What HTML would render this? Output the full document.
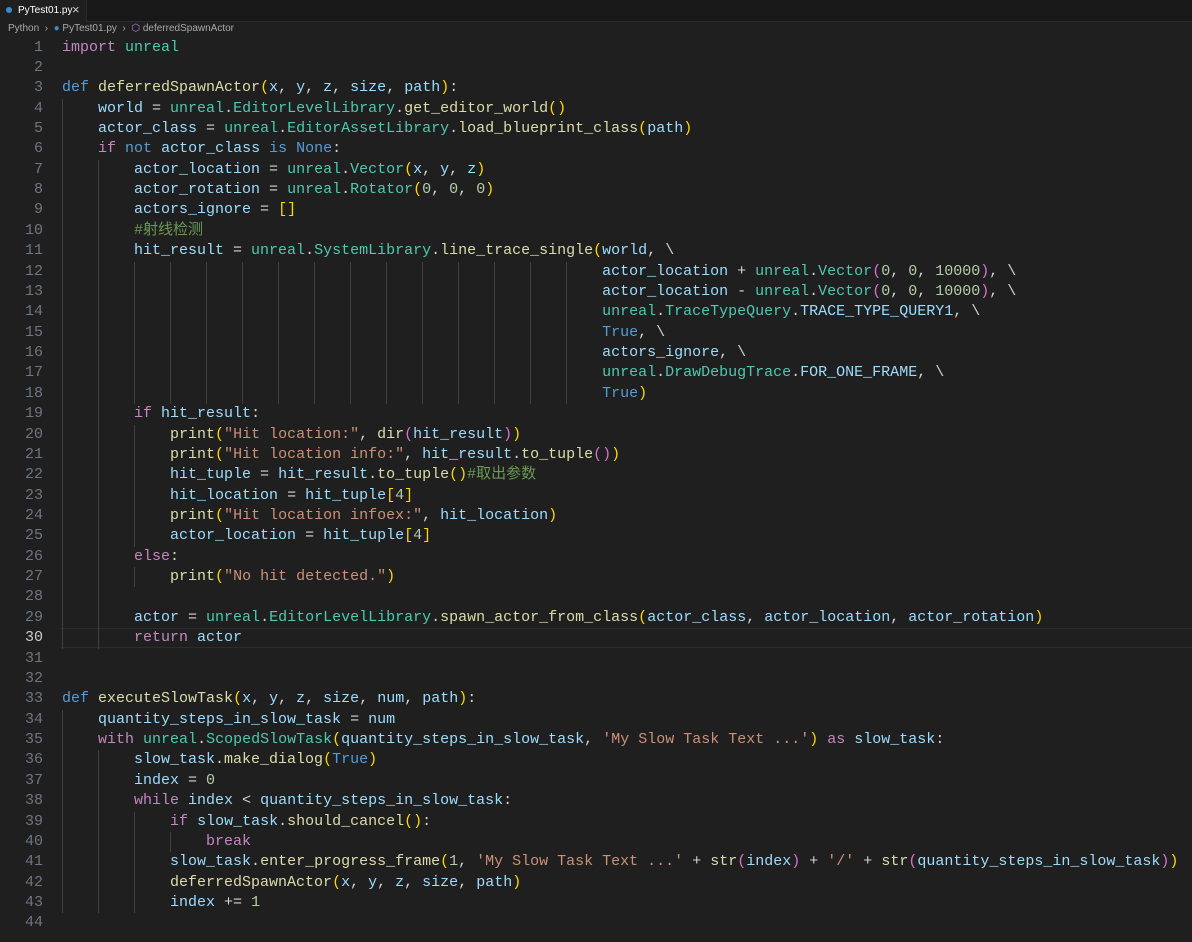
<!DOCTYPE html>
<html><head><meta charset="utf-8"><style>
body{margin:0;width:1192px;height:942px;background:#1f1f1f;overflow:hidden;position:relative;font-family:"Liberation Mono","Noto Sans CJK SC",monospace;}
#tabs{position:absolute;left:0;top:0;width:1192px;height:21px;background:#181818;border-bottom:1px solid #2b2b2b}
#tab{position:absolute;left:0;top:0;width:86px;height:22px;background:#1f1f1f;font:10px "Liberation Sans",sans-serif;color:#fff;border-right:1px solid #2b2b2b}
#crumb{position:absolute;left:8px;top:23px;font:10px "Liberation Sans",sans-serif;color:#a9a9a9;white-space:pre}
.ln{position:absolute;left:0;width:43px;text-align:right;color:#6e7681;font-size:15px;line-height:20.37px}
.cl{position:absolute;left:62px;white-space:pre;font-size:15px;line-height:20.37px;color:#d4d4d4}
.g{position:absolute;width:1px;background:#404040}
.k{color:#c586c0}.d{color:#569cd6}.f{color:#dcdcaa}.v{color:#9cdcfe}.c{color:#4ec9b0}.s{color:#ce9178}.n{color:#b5cea8}.cm{color:#6a9955}.b1{color:#ffd700}.b2{color:#da70d6}.b3{color:#179fff}
</style></head><body>
<div id="tabs"></div>
<div id="tab"><span style="position:absolute;left:6px;top:7px;width:6px;height:6px;border-radius:50%;background:#3d8ac6"></span><span style="position:absolute;left:18px;top:5px">PyTest01.py</span><span style="position:absolute;left:72px;top:2px;color:#ccc;font-size:13px">×</span></div>
<div id="crumb">Python  ›  <span style="color:#3d8ac6">●</span> PyTest01.py  ›  <span style="color:#b180d7">⬡</span> deferredSpawnActor</div>
<div style="position:absolute;left:60px;top:627.7px;width:1132px;height:18.4px;border-top:1px solid #2c2c2c;border-bottom:1px solid #2c2c2c"></div>
<div id="guides"></div>
<div id="code"></div>
<script>
var P='                                                            ';
var L=[
'<span class="k">import</span> <span class="c">unreal</span>',
'',
'<span class="d">def</span> <span class="f">deferredSpawnActor</span><span class="b1">(</span><span class="v">x</span>, <span class="v">y</span>, <span class="v">z</span>, <span class="v">size</span>, <span class="v">path</span><span class="b1">)</span>:',
'    <span class="v">world</span> = <span class="c">unreal</span>.<span class="c">EditorLevelLibrary</span>.<span class="f">get_editor_world</span><span class="b1">()</span>',
'    <span class="v">actor_class</span> = <span class="c">unreal</span>.<span class="c">EditorAssetLibrary</span>.<span class="f">load_blueprint_class</span><span class="b1">(</span><span class="v">path</span><span class="b1">)</span>',
'    <span class="k">if</span> <span class="d">not</span> <span class="v">actor_class</span> <span class="d">is</span> <span class="d">None</span>:',
'        <span class="v">actor_location</span> = <span class="c">unreal</span>.<span class="c">Vector</span><span class="b1">(</span><span class="v">x</span>, <span class="v">y</span>, <span class="v">z</span><span class="b1">)</span>',
'        <span class="v">actor_rotation</span> = <span class="c">unreal</span>.<span class="c">Rotator</span><span class="b1">(</span><span class="n">0</span>, <span class="n">0</span>, <span class="n">0</span><span class="b1">)</span>',
'        <span class="v">actors_ignore</span> = <span class="b1">[]</span>',
'        <span class="cm">#射线检测</span>',
'        <span class="v">hit_result</span> = <span class="c">unreal</span>.<span class="c">SystemLibrary</span>.<span class="f">line_trace_single</span><span class="b1">(</span><span class="v">world</span>, \\',
P+'<span class="v">actor_location</span> + <span class="c">unreal</span>.<span class="c">Vector</span><span class="b2">(</span><span class="n">0</span>, <span class="n">0</span>, <span class="n">10000</span><span class="b2">)</span>, \\',
P+'<span class="v">actor_location</span> - <span class="c">unreal</span>.<span class="c">Vector</span><span class="b2">(</span><span class="n">0</span>, <span class="n">0</span>, <span class="n">10000</span><span class="b2">)</span>, \\',
P+'<span class="c">unreal</span>.<span class="c">TraceTypeQuery</span>.<span class="v">TRACE_TYPE_QUERY1</span>, \\',
P+'<span class="d">True</span>, \\',
P+'<span class="v">actors_ignore</span>, \\',
P+'<span class="c">unreal</span>.<span class="c">DrawDebugTrace</span>.<span class="v">FOR_ONE_FRAME</span>, \\',
P+'<span class="d">True</span><span class="b1">)</span>',
'        <span class="k">if</span> <span class="v">hit_result</span>:',
'            <span class="f">print</span><span class="b1">(</span><span class="s">"Hit location:"</span>, <span class="f">dir</span><span class="b2">(</span><span class="v">hit_result</span><span class="b2">)</span><span class="b1">)</span>',
'            <span class="f">print</span><span class="b1">(</span><span class="s">"Hit location info:"</span>, <span class="v">hit_result</span>.<span class="f">to_tuple</span><span class="b2">()</span><span class="b1">)</span>',
'            <span class="v">hit_tuple</span> = <span class="v">hit_result</span>.<span class="f">to_tuple</span><span class="b1">()</span><span class="cm">#取出参数</span>',
'            <span class="v">hit_location</span> = <span class="v">hit_tuple</span><span class="b1">[</span><span class="n">4</span><span class="b1">]</span>',
'            <span class="f">print</span><span class="b1">(</span><span class="s">"Hit location infoex:"</span>, <span class="v">hit_location</span><span class="b1">)</span>',
'            <span class="v">actor_location</span> = <span class="v">hit_tuple</span><span class="b1">[</span><span class="n">4</span><span class="b1">]</span>',
'        <span class="k">else</span>:',
'            <span class="f">print</span><span class="b1">(</span><span class="s">"No hit detected."</span><span class="b1">)</span>',
'',
'        <span class="v">actor</span> = <span class="c">unreal</span>.<span class="c">EditorLevelLibrary</span>.<span class="f">spawn_actor_from_class</span><span class="b1">(</span><span class="v">actor_class</span>, <span class="v">actor_location</span>, <span class="v">actor_rotation</span><span class="b1">)</span>',
'        <span class="k">return</span> <span class="v">actor</span>',
'',
'',
'<span class="d">def</span> <span class="f">executeSlowTask</span><span class="b1">(</span><span class="v">x</span>, <span class="v">y</span>, <span class="v">z</span>, <span class="v">size</span>, <span class="v">num</span>, <span class="v">path</span><span class="b1">)</span>:',
'    <span class="v">quantity_steps_in_slow_task</span> = <span class="v">num</span>',
'    <span class="k">with</span> <span class="c">unreal</span>.<span class="c">ScopedSlowTask</span><span class="b1">(</span><span class="v">quantity_steps_in_slow_task</span>, <span class="s">\'My Slow Task Text ...\'</span><span class="b1">)</span> <span class="k">as</span> <span class="v">slow_task</span>:',
'        <span class="v">slow_task</span>.<span class="f">make_dialog</span><span class="b1">(</span><span class="d">True</span><span class="b1">)</span>',
'        <span class="v">index</span> = <span class="n">0</span>',
'        <span class="k">while</span> <span class="v">index</span> &lt; <span class="v">quantity_steps_in_slow_task</span>:',
'            <span class="k">if</span> <span class="v">slow_task</span>.<span class="f">should_cancel</span><span class="b1">()</span>:',
'                <span class="k">break</span>',
'            <span class="v">slow_task</span>.<span class="f">enter_progress_frame</span><span class="b1">(</span><span class="n">1</span>, <span class="s">\'My Slow Task Text ...\'</span> + <span class="f">str</span><span class="b2">(</span><span class="v">index</span><span class="b2">)</span> + <span class="s">\'/\'</span> + <span class="f">str</span><span class="b2">(</span><span class="v">quantity_steps_in_slow_task</span><span class="b2">)</span><span class="b1">)</span>',
'            <span class="f">deferredSpawnActor</span><span class="b1">(</span><span class="v">x</span>, <span class="v">y</span>, <span class="v">z</span>, <span class="v">size</span>, <span class="v">path</span><span class="b1">)</span>',
'            <span class="v">index</span> += <span class="n">1</span>',
''];
var LH=20.37,T=37.5,h='';
for(var i=0;i<L.length;i++){var y=T+i*LH;h+='<div class="ln" style="top:'+y+'px;color:'+(i==29?'#ccc':'#6e7681')+'">'+(i+1)+'</div><div class="cl" style="top:'+y+'px">'+L[i]+'</div>';}
document.getElementById('code').innerHTML=h;
var G=[[62,4,30],[62,34,43],[98,7,30],[98,36,43],[134,20,25],[134,27,27],[134,39,43],[170,40,40]];
for(var x=134;x<=566;x+=36)G.push([x,12,18]);
var g='';G.forEach(function(a){g+='<div class="g" style="left:'+a[0]+'px;top:'+(T+(a[1]-1)*LH)+'px;height:'+((a[2]-a[1]+1)*LH)+'px"></div>';});
document.getElementById('guides').innerHTML=g;
</script>
</body></html>
